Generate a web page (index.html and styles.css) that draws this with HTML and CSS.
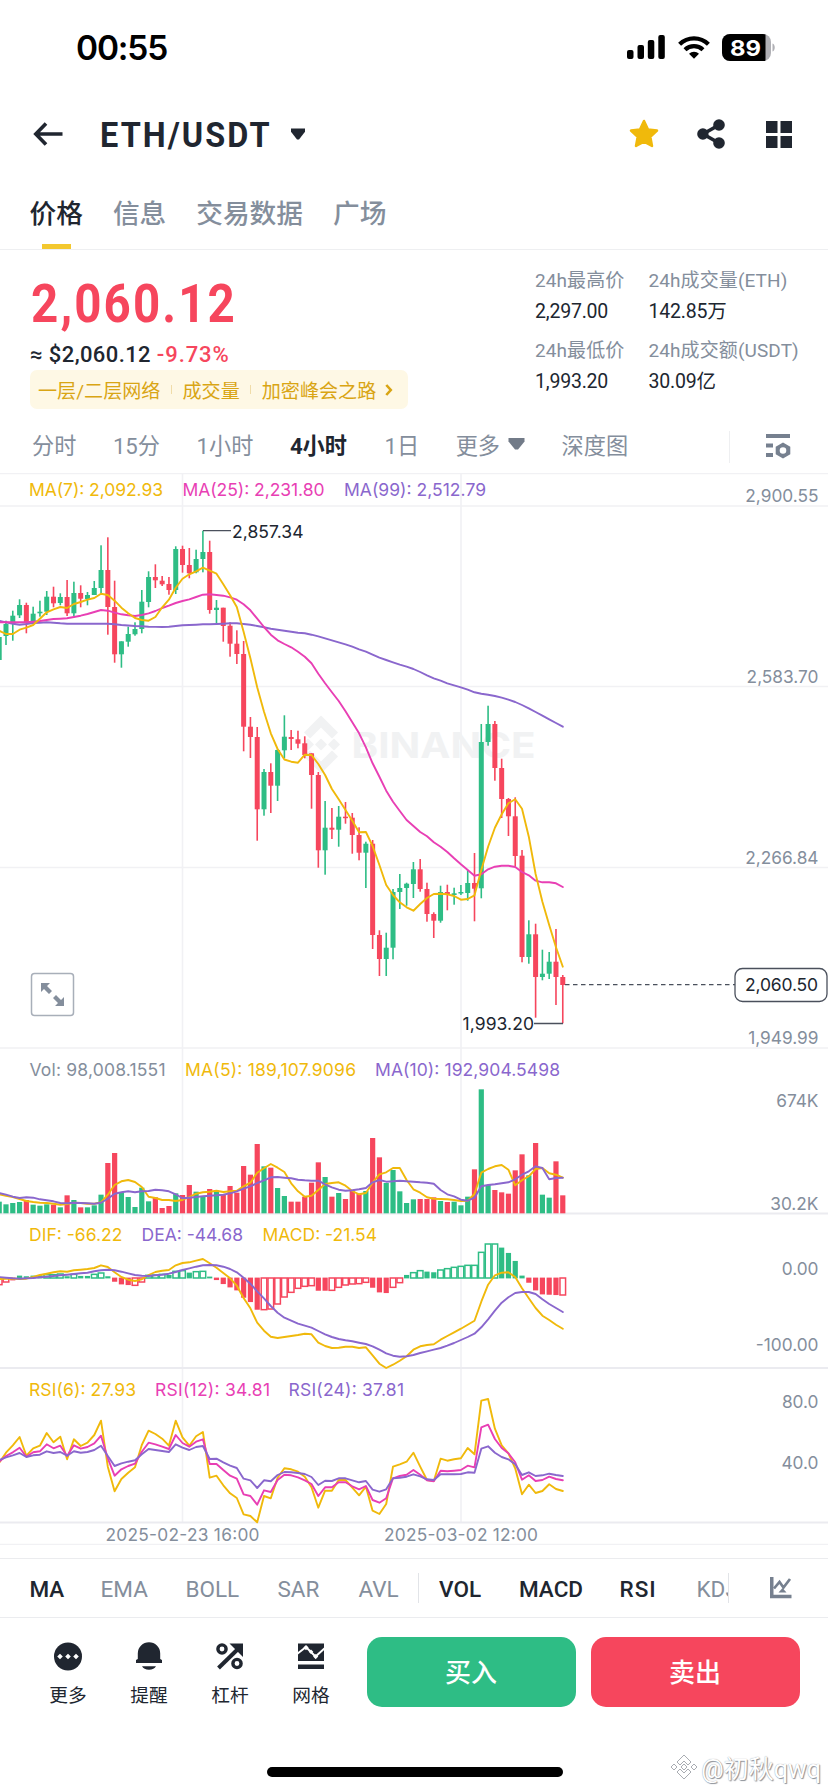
FILE: index.html
```html
<!DOCTYPE html>
<html lang="zh-CN">
  <head>
    <meta charset="utf-8" />
    <title>ETH/USDT</title>
    <link rel="stylesheet" href="styles.css">
  </head>

  <body>
    <!-- Status bar -->
    <div class="status-bar">
      <span class="clock">00:55</span>
      <svg class="signal" width="38" height="24" viewBox="0 0 38 24">
        <rect x="0" y="15" width="6.5" height="9" rx="2" />
        <rect x="10.5" y="10" width="6.5" height="14" rx="2" />
        <rect x="20.8" y="5" width="6.5" height="19" rx="2" />
        <rect x="31.3" y="0" width="6.5" height="24" rx="2" />
      </svg>
      <svg class="wifi" width="32" height="24" viewBox="0 0 32 24" fill="none" stroke="#000" stroke-width="4.2">
        <path d="M1.6 9.2a20.5 20.5 0 0 1 28.8 0" />
        <path d="M7 14.8a13 13 0 0 1 18 0" />
        <path d="M16 23.8l-5-5a7.2 7.2 0 0 1 10 0z" fill="#000" stroke="none" />
      </svg>
      <svg class="battery" width="54" height="27" viewBox="0 0 54 27">
        <defs>
          <clipPath id="batteryLevel"><rect width="43.5" height="27" /></clipPath>
        </defs>
        <rect width="49" height="27" rx="8" fill="#b0b0b5" />
        <rect width="49" height="27" rx="8" clip-path="url(#batteryLevel)" />
        <path d="M50.5 9.5c3 .8 3 7.2 0 8z" fill="#b0b0b5" />
        <text x="8" y="21.5" textLength="31" lengthAdjust="spacingAndGlyphs">89</text>
      </svg>
    </div>

    <!-- Pair header -->
    <div class="header">
      <svg class="back" width="30" height="24" viewBox="0 0 30 24" fill="none" stroke="#202630" stroke-width="3.6">
        <path d="M29.5 12H3M13 1.5L2.8 12L13 22.5" />
      </svg>
      <h1>ETH/USDT</h1>
      <svg class="caret" width="16" height="12" viewBox="0 0 16 12"><path d="M1 0.5h14v3.2L9 11.5H7L1 3.7z" fill="#202630" /></svg>
      <svg class="star" width="30" height="30" viewBox="0 0 30 30">
        <path d="M15 2l3.9 8.4 9.1 1.1-6.7 6.3 1.7 9.2-8-4.4-8 4.4 1.7-9.2L2 11.5l9.1-1.1z" fill="#f0b90b" stroke="#f0b90b" stroke-width="2.5" stroke-linejoin="round" />
      </svg>
      <svg class="share" width="28" height="30" viewBox="0 0 28 30" fill="#202630">
        <path d="M22 6L6 15l16 9" fill="none" stroke="#202630" stroke-width="3.6" />
        <circle cx="22" cy="6" r="5.8" /><circle cx="5.9" cy="15" r="5.7" /><circle cx="22" cy="24" r="5.8" />
      </svg>
      <svg class="grid" width="26" height="27" viewBox="0 0 26 27" fill="#202630">
        <path d="M0 0h11.5v12H0zM14.5 0H26v12H14.5zM0 15h11.5v12H0zM14.5 15H26v12H14.5z" />
      </svg>
    </div>

    <div class="tabs">
      <a class="tab active">价格</a>
      <a class="tab">信息</a>
      <a class="tab">交易数据</a>
      <a class="tab">广场</a>
    </div>

    <!-- Ticker -->
    <div class="ticker">
      <div class="ticker-main">
        <div class="price">2,060.12</div>
        <div class="fiat">≈ $2,060.12 <span class="change">-9.73%</span></div>
        <div class="tags">
          <span>一层/二层网络</span>
          <i></i>
          <span>成交量</span>
          <i></i>
          <span>加密峰会之路</span>
          <svg width="8" height="12" viewBox="0 0 8 12" fill="none" stroke="#d9a514" stroke-width="2.6"><path d="M1.3 1l4.5 5-4.5 5" /></svg>
        </div>
      </div>
      <div class="ticker-stats">
        <div class="stat"><label>24h最高价</label><b>2,297.00</b></div>
        <div class="stat"><label>24h成交量(ETH)</label><b>142.85万</b></div>
        <div class="stat"><label>24h最低价</label><b>1,993.20</b></div>
        <div class="stat"><label>24h成交额(USDT)</label><b>30.09亿</b></div>
      </div>
    </div>

    <div class="intervals">
      <span>分时</span>
      <span>15分</span>
      <span>1小时</span>
      <span class="active">4小时</span>
      <span>1日</span>
      <span class="more">更多<svg width="17" height="12" viewBox="0 0 17 12"><path d="M.5 0h16v3.5L10 11.5H7L.5 3.5z" fill="#727b88" /></svg></span>
      <span>深度图</span>
      <div class="interval-settings">
        <svg width="25" height="25" viewBox="0 0 25 25" fill="#76808f">
          <path d="M0 0h24v4H0zM0 9.5h7v4H0zM0 19h7v4H0z" />
          <path fill-rule="evenodd" d="M17 8.5l7.3 4.2v7.6L17 24.5l-7.3-4.2v-7.6zM17 13.2a3.3 3.3 0 1 0 0 6.6a3.3 3.3 0 0 0 0-6.6z" />
        </svg>
      </div>
    </div>

    <!-- Chart, series are drawn by script.js -->
    <svg id="chart" width="828" height="1072" viewBox="0 473 828 1072">
      <g class="grid-lines">
        <path d="M0 473.5H828M0 506H828M0 686.5H828M0 867.5H828M0 1048H828M182.5 473V1522M461 473V1522" />
        <path class="pane-line" d="M0 1213.5H828M0 1368H828M0 1522.5H828" />
        <path d="M0 1544.5H828" />
      </g>

      <g class="watermark">
        <path d="M310 738.5l11-11 11 11 6-6-17-17-17 17zM302 744.5l6-6 6 6-6 6zM315 744.5l6-6 6 6-6 6zM328 744.5l6-6 6 6-6 6zM304 756.5l17 17 17-17-6-6-11 11-11-11z" />
        <text x="351.5" y="758" textLength="184" lengthAdjust="spacingAndGlyphs">BINANCE</text>
      </g>

      <g id="candles"></g>
      <g id="volume"></g>
      <g id="macd"></g>
      <g id="lines"></g>

      <g class="legend">
        <text class="yellow" x="29" y="495.5" textLength="134">MA(7): 2,092.93</text>
        <text class="pink" x="182.5" y="495.5" textLength="142">MA(25): 2,231.80</text>
        <text class="purple" x="344" y="495.5" textLength="142">MA(99): 2,512.79</text>
        <text class="gray" x="29.5" y="1076" textLength="136">Vol: 98,008.1551</text>
        <text class="yellow" x="185" y="1076" textLength="171">MA(5): 189,107.9096</text>
        <text class="purple" x="375" y="1076" textLength="185">MA(10): 192,904.5498</text>
        <text class="yellow" x="29" y="1240.5" textLength="93.5">DIF: -66.22</text>
        <text class="purple" x="141.5" y="1240.5" textLength="101.5">DEA: -44.68</text>
        <text class="yellow" x="262.5" y="1240.5" textLength="114.5">MACD: -21.54</text>
        <text class="yellow" x="29" y="1395.5" textLength="107">RSI(6): 27.93</text>
        <text class="pink" x="155" y="1395.5" textLength="115">RSI(12): 34.81</text>
        <text class="purple" x="288.5" y="1395.5" textLength="115.5">RSI(24): 37.81</text>
      </g>

      <g class="axis">
        <text x="818.5" y="502">2,900.55</text>
        <text x="818.5" y="683">2,583.70</text>
        <text x="818.5" y="863.5">2,266.84</text>
        <text x="818.5" y="1044">1,949.99</text>
        <text x="818.5" y="1107">674K</text>
        <text x="818.5" y="1209.5">30.2K</text>
        <text x="818.5" y="1274.5">0.00</text>
        <text x="818.5" y="1350.5">-100.00</text>
        <text x="818.5" y="1407.5">80.0</text>
        <text x="818.5" y="1468.5">40.0</text>
        <text x="259.5" y="1540.5" textLength="154">2025-02-23 16:00</text>
        <text x="538" y="1540.5" textLength="154">2025-03-02 12:00</text>
      </g>

      <g class="marks">
        <path d="M203 530.7H231M534 1023.5H563" />
        <text x="232" y="537.5" textLength="71.5">2,857.34</text>
        <text x="462.5" y="1030" textLength="71.5">1,993.20</text>
        <path d="M565 984.7H735" stroke-dasharray="4.5 3.5" />
        <rect x="735" y="968.5" width="92" height="33" rx="7.5" fill="#fff" />
        <text x="745" y="991" textLength="73">2,060.50</text>
      </g>

      <g class="expand">
        <rect x="31.5" y="973.5" width="42" height="42" rx="3" />
        <path d="M41 983h9l-3 3 5 5-3 3-5-5-3 3zM64 1006h-9l3-3-5-5 3-3 5 5 3-3z" />
      </g>
    </svg>

    <!-- Indicators -->
    <div class="indicators">
      <div class="indicator-list">
        <span class="active i-ma">MA</span>
        <span class="i-ema">EMA</span>
        <span class="i-boll">BOLL</span>
        <span class="i-sar">SAR</span>
        <span class="i-avl">AVL</span>
        <span class="active i-vol">VOL</span>
        <span class="active i-macd">MACD</span>
        <span class="active i-rsi">RSI</span>
        <span class="i-kdj">KDJ</span>
      </div>
      <svg width="22" height="22" viewBox="0 0 22 22" fill="none" stroke="#76808f">
        <path d="M1.7 0v19.5H21.5" stroke-width="3.6" />
        <path d="M4 11.5L9.5 5l4 5.5L20 2" stroke-width="2.7" />
        <path d="M8.5 15.5l4-4.5 4 4.5z" fill="#76808f" stroke="none" />
      </svg>
    </div>

    <!-- Actions -->
    <div class="actions">
      <div class="action">
        <svg width="28" height="30" viewBox="0 0 28 30">
          <circle cx="14" cy="14.5" r="14" fill="#202630" />
          <path d="M6 11.7l2.8 2.8L6 17.3l-2.8-2.8zM14 11.7l2.8 2.8-2.8 2.8-2.8-2.8zM22 11.7l2.8 2.8-2.8 2.8-2.8-2.8z" fill="#fff" />
        </svg>
        更多
      </div>
      <div class="action">
        <svg width="28" height="30" viewBox="0 0 28 30" fill="#202630">
          <path d="M2.8 17V11.5a11.2 11.2 0 0 1 22.4 0V17L27 18v3H1v-3zM7 24.3h14a7.5 5.2 0 0 1-14 0z" />
        </svg>
        提醒
      </div>
      <div class="action">
        <svg width="28" height="30" viewBox="0 0 28 30" fill="none" stroke="#202630" stroke-width="3.4">
          <circle cx="6" cy="7" r="4.1" /><circle cx="21" cy="21.5" r="4.1" />
          <path d="M2.5 26L21.5 7.5" stroke-width="4" />
          <path d="M13.5 1.5H27V15z" fill="#202630" stroke="none" />
        </svg>
        杠杆
      </div>
      <div class="action">
        <svg width="28" height="30" viewBox="0 0 28 30">
          <path d="M1 1.5h26V19H1zM1 22.5h26V27H1z" fill="#202630" />
          <path d="M0 12L9 5l9.5 9.5L28 6" fill="none" stroke="#fff" stroke-width="2" />
          <path d="M9 3l2.6 2.6L9 8.2 6.4 5.6zM14 7.5l2.3 2.3-2.3 2.3-2.3-2.3zM18.7 12l2.6 2.6-2.6 2.6-2.6-2.6z" fill="#fff" />
        </svg>
        网格
      </div>
      <button class="buy">买入</button>
      <button class="sell">卖出</button>
    </div>

    <div class="footer">
      <div class="home-indicator"></div>
      <div class="signature">
        <svg width="28" height="28" viewBox="0 0 28 28" fill="#fff" stroke="#a9acb2" stroke-width="1">
          <path d="M7 9l7-7 7 7-3 3-4-4-4 4zM1 14l3-3 3 3-3 3zM11 14l3-3 3 3-3 3zM21 14l3-3 3 3-3 3zM7 19l3-3 4 4 4-4 3 3-7 7z" />
        </svg>
        <span>@初秋qwq</span>
      </div>
    </div>

    <script src="script.js"></script>
  </body>
</html>
```
FILE: styles.css
```css
body {
  width: 828px;
  height: 1792px;
  margin: 0;
  background-color: #ffffff;
  color: #202630;
  font-family: Roboto, "Noto Sans CJK SC", sans-serif;
  overflow: hidden;
}

svg {
  display: block;
  flex: none;
}

/* Status bar */
.status-bar {
  display: flex;
  align-items: center;
  height: 94px;
  padding-left: 76px;
  box-sizing: border-box;
}

.clock {
  width: 551px;
  padding-top: 1px;
  box-sizing: border-box;
  color: #000;
  font: 600 33.5px Inter, sans-serif;
  letter-spacing: -1.2px;
}

.wifi {
  margin-left: 12.5px;
}

.battery {
  margin-left: 12.5px;
}

.battery text {
  font: 700 22px Inter, sans-serif;
  fill: #fff;
}

/* Header */
.header {
  display: flex;
  align-items: center;
  height: 80px;
  padding-left: 33px;
}

.header h1 {
  width: 172px;
  margin: 2px 0 0 36.5px;
  font-size: 34.5px;
  font-weight: 700;
  letter-spacing: 2.2px;
  white-space: nowrap;
  transform: scaleX(0.94);
  transform-origin: left;
}

.caret {
  margin-left: 18.5px;
}

.star {
  margin-left: 322.5px;
}

.share {
  margin-left: 38px;
}

.grid {
  margin-left: 41.5px;
}

.tabs {
  display: flex;
  gap: 30px;
  height: 75px;
  padding-left: 29.5px;
  border-bottom: 1px solid #eeeff1;
}

.tab {
  position: relative;
  padding-top: 21px;
  font-size: 26.7px;
  line-height: 38px;
  font-weight: 500;
  color: #848e9c;
}

.tab.active {
  color: #202630;
}

.tab.active::after {
  content: "";
  position: absolute;
  left: 12px;
  bottom: 0;
  width: 29px;
  height: 5px;
  background-color: #f3c82f;
}

/* Ticker */
.ticker {
  display: flex;
  height: 170px;
  padding-left: 30px;
}

.ticker-main {
  width: 505px;
}

.price {
  margin: 20.5px 0 0 0.5px;
  height: 66px;
  color: #f6465d;
  font-size: 54px;
  line-height: 66px;
  font-weight: 700;
  letter-spacing: 2.4px;
  transform: scaleX(0.88);
  transform-origin: left;
}

.fiat {
  height: 33.5px;
  font-size: 22px;
  line-height: 35px;
  font-weight: 500;
  letter-spacing: 0.4px;
  white-space: pre;
}

.change {
  color: #f6465d;
  letter-spacing: 0.9px;
}

.tags {
  display: inline-flex;
  align-items: center;
  width: 362px;
  height: 39px;
  padding: 0 8px;
  border-radius: 7px;
  background-color: #fef8e5;
  color: #d9a514;
  font-size: 19.1px;
}

.tags i {
  width: 1px;
  height: 9px;
  margin: 0 10.5px;
  background-color: #f0dca8;
}

.tags svg {
  margin-left: 8.5px;
}

.ticker-stats {
  display: grid;
  grid-template-columns: 113.5px auto;
  align-content: start;
  padding-top: 15px;
}

.stat {
  height: 70px;
}

.stat label,
.stat b {
  display: block;
  height: 31px;
  line-height: 31px;
  white-space: nowrap;
}

.stat label {
  color: #848e9c;
  font-size: 19px;
  letter-spacing: 0.1px;
}

.stat b {
  font-size: 19.5px;
  font-weight: 400;
  letter-spacing: -0.2px;
}

/* Intervals */
.intervals {
  display: flex;
  align-items: center;
  height: 53px;
  padding-left: 32px;
  gap: 36.5px;
  color: #848e9c;
  font-size: 22.2px;
  white-space: nowrap;
}

.intervals span {
  padding-bottom: 5px;
}

.intervals .active {
  padding-right: 1px;
  color: #202630;
  font-weight: 700;
}

.intervals .more {
  display: flex;
  align-items: center;
  gap: 8px;
}

.interval-settings {
  display: flex;
  align-items: center;
  margin-left: auto;
  height: 32px;
  padding: 0 37px 0 36px;
  border-left: 1px solid #eeeff1;
}

/* Chart */
#chart text {
  font-family: Inter, sans-serif;
  font-size: 17.5px;
}

.grid-lines path {
  fill: none;
  stroke: #f1f1f4;
  stroke-width: 1.6;
}

.grid-lines .pane-line {
  stroke: #ebebf0;
  stroke-width: 1.8;
}

.watermark {
  fill: #f1f2f3;
}

#chart .watermark text {
  font-size: 36px;
  font-weight: 700;
}

.legend .yellow {
  fill: #f0b90b;
}

.legend .pink {
  fill: #e83fb4;
}

.legend .purple {
  fill: #8a67cd;
}

.legend .gray,
.axis text {
  fill: #848e9c;
}

#chart .axis text {
  font-size: 17.3px;
  text-anchor: end;
}

.marks text {
  fill: #202630;
}

.marks path,
.marks rect {
  stroke: #4a505c;
  stroke-width: 1.3;
}

.expand rect {
  fill: #fff;
  stroke: #a8afb9;
  stroke-width: 1.5;
}

.expand path {
  fill: #848e9c;
}

/* Indicators */
.indicators {
  display: flex;
  align-items: center;
  height: 58px;
  margin-top: 13px;
  border-top: 1.5px solid #ebecef;
  border-bottom: 1.5px solid #ebecef;
}

.indicator-list {
  display: flex;
  align-items: center;
  width: 698px;
  height: 30px;
  padding-left: 29.5px;
  margin-right: 41px;
  border-right: 1px solid #e2e4e8;
  color: #848e9c;
  font-size: 22.5px;
  overflow: hidden;
}

.indicator-list span {
  flex: none;
  padding-top: 1px;
}

.indicator-list .active {
  color: #202630;
  font-weight: 500;
}

.i-ma { width: 71px; }
.i-ema { width: 85px; }
.i-boll { width: 92px; }
.i-sar { width: 81px; }
.i-avl { width: 59px; }
.indicator-list .i-vol {
  width: 80px;
  padding: 1px 0 0 20.5px;
  border-left: 1px solid #e2e4e8;
  line-height: 30px;
}
.i-macd { width: 100.5px; }
.i-rsi { width: 77px; letter-spacing: 1px; }

/* Actions */
.actions {
  display: flex;
  height: 130px;
  padding: 19px 0 0 27.5px;
  box-sizing: border-box;
}

.action {
  display: flex;
  flex-direction: column;
  align-items: center;
  width: 81px;
  padding-top: 5px;
  gap: 8px;
  font-size: 18.7px;
}

.buy,
.sell {
  width: 209px;
  height: 70px;
  margin-left: 15px;
  padding: 0 0 4px;
  border: 0;
  border-radius: 15px;
  background-color: #2ebd85;
  color: #fff;
  font-family: inherit;
  font-size: 26px;
  font-weight: 500;
}

.sell {
  background-color: #f6465d;
}

/* Footer */
.footer {
  position: relative;
}

.home-indicator {
  width: 296px;
  height: 10px;
  margin: 19px 0 0 266.5px;
  border-radius: 5px;
  background-color: #000;
}

.signature {
  position: absolute;
  right: 7px;
  top: -18px;
  display: flex;
  align-items: center;
  gap: 3px;
  color: #fff;
  font-size: 25px;
  text-shadow: 0 0 1px #8c9098, 1px 1px 1px #8c9098;
}
```
FILE: script.js
```js
const NS = "http://www.w3.org/2000/svg";
const STEP = 6.79;
const GREEN = "#2ebd85";
const RED = "#f6465d";
const YELLOW = "#f0b90b";
const PINK = "#e83fb4";
const PURPLE = "#8a67cd";

// high, body top, body bottom, low
const candles = [
  "g 637 637 660 660", "g 620.7 624 636 645", "g 610.7 615.7 624 640.7", "g 599.3 605 615.3 618",
  "r 602.7 605 622.3 633.3", "g 606.7 613.7 622.3 623", "g 600.7 611.7 613.3 616.7", "g 591 596.7 611.7 615",
  "r 586.7 596.7 603.3 607.3", "g 593.3 597 603 605.3", "r 580 597 613.3 616", "g 581.7 593 613.3 616",
  "r 585.3 593 598.7 607.3", "g 592 595 599 605.3", "g 581 588 595 595", "g 545.3 570 588 593.3",
  "r 537.3 570 607 634.7", "r 580.7 607 654.3 662.7", "g 641.3 641.3 654.3 667.7", "g 626.7 634 641.7 646.7",
  "g 622.3 629 634.3 635.7", "g 590 601.7 629 633.3", "g 571.3 577 602 607.3", "r 564.3 577 580.3 588",
  "r 576 580.7 584.3 586", "r 577 584 590 594.7", "g 546.3 549 590 594", "r 545.7 549 565 572.7",
  "r 548 565 573.3 578.3", "g 549.7 559 572.3 573.3", "g 530.7 552 559 572.3", "r 540.7 552 610 613.7",
  "g 600 607.7 610 623.3", "r 607.7 607.7 626 641.7", "r 622.3 625.7 643.7 656.7", "r 630.3 643.7 654 664",
  "r 641 654 726.7 751.3", "r 717 726.7 737 758", "r 727 737 809.3 840.7", "g 769 772 809.3 815.7",
  "r 763.3 772 785.7 813", "g 749 750 785.7 801", "g 715.3 736.7 750.3 758.3", "r 730 737 739 750",
  "r 730.7 739.3 743.7 748.3", "r 736.3 743.3 755 758.3", "r 753.3 753.3 775 808.7", "r 772 775 850.3 867.7",
  "g 801 827.7 850.3 874.7", "r 808 827.7 829.7 839", "g 806 816.7 829.7 846.7", "r 802 816.7 818 823.7",
  "r 813 817.7 835 853.7", "r 827.3 835 852.7 860.3", "g 841.7 843.7 852.7 888", "r 840 843.7 935 949",
  "r 930.3 935 959 976", "g 932.7 947.7 959 976", "g 889 892 947.7 959.3", "g 874 888 892 909",
  "g 882.7 883.7 888 905.7", "g 862 869.3 884 898", "r 859 869.3 889 891.7", "r 882.7 889 914 921.7",
  "r 912.3 914 920.7 938", "g 885.7 892 920.7 922.7", "r 884.7 892 894.7 910.3", "g 887.7 893.3 895 904.7",
  "g 885 892 893.3 895", "g 870 883 893 900.7", "r 853 883 888.7 921.3", "g 724 742 888.3 898.3",
  "g 705.7 724 742 745.7", "r 721 724 768 780.7", "r 758.7 768 799 818", "r 798 799 816.3 836",
  "r 797.3 816.3 856 866.7", "r 850 855.7 957 962.3", "g 920.3 934.3 957 963.7", "r 923.7 934.3 977 1017.7",
  "g 949.7 973.7 977 980.3", "g 952 961.7 973.7 979", "r 929 961.7 977 1005", "r 975 977 985 1023.3"
];

const ma7 = [630.7, 634, 634, 629.7, 627.7, 625, 618.7, 612.3, 609.3, 607, 608, 604, 602, 599.7, 598, 593.7, 595, 600.7, 607.7, 613.3, 618, 620, 620.7, 617, 607.3, 599.7, 587.7, 578.7, 574.3, 571.3, 567.7, 570.7, 573.7, 584.3, 595.3, 607, 631.7, 658.3, 687.3, 711.7, 733.3, 749, 759.5, 761.7, 762.7, 754.7, 755, 764, 775, 789, 799.3, 810, 820.7, 832.3, 832, 846, 865, 885, 895, 902.3, 907.3, 910.7, 904, 898, 894, 893.7, 894.3, 896, 899.7, 899, 895.3, 870, 846.7, 827.7, 814.3, 803.3, 799.3, 808.7, 836.7, 874, 901.7, 925, 947.3, 966.7];
const ma25 = [622.3, 622.3, 622.3, 622.3, 622.3, 621.7, 621, 620, 619, 618.7, 618.3, 617, 615.7, 614, 612, 610, 610.7, 612.7, 614.3, 615.3, 616, 615, 613.3, 611, 608, 605.7, 603, 601, 599.3, 597, 594.7, 594.3, 595, 595.7, 597.3, 599.7, 604.3, 610.3, 618.7, 627, 634.7, 640.3, 644, 647.3, 651.7, 656.7, 663.3, 673.7, 683.3, 692.3, 701, 711.3, 722.3, 733.3, 747.3, 763.3, 776.7, 790.7, 801.7, 811, 820, 826, 832, 836.3, 842.3, 846.7, 852, 858.3, 864.3, 870, 875.7, 874.3, 869.3, 866.7, 865.7, 865.7, 867, 872, 875.3, 880.7, 882.3, 882.3, 883.3, 887];
const ma99 = [620.7, 622.3, 623.7, 624.7, 624, 623, 622.7, 622.3, 622.7, 623.3, 623.7, 623.7, 623.7, 623.7, 623.7, 623.7, 623.7, 624.3, 625, 625.5, 626, 626.3, 626.7, 626.9, 627, 626.7, 626, 625.3, 625, 624.7, 624.3, 624.2, 624, 623.7, 623.3, 623.3, 624, 624.7, 626, 627.3, 628.7, 629.7, 630.7, 631.7, 632.7, 633.3, 634.7, 636.3, 638.3, 640.3, 642.3, 644.3, 646.7, 649.3, 651.7, 654.7, 657.7, 660, 662.3, 664.7, 666.7, 669, 672, 675.3, 678.3, 680.7, 683.3, 685.3, 687.3, 689.7, 692.3, 693.7, 694.7, 696, 697.7, 699.7, 702, 705, 708.3, 712, 715.7, 719.3, 723, 726.7];

// Everything below is in thirds of a pixel from the top of its pane
const VOL_TOP = 1050;
const VOL_BASE = 1213.3;
const vol = [455, 463, 459, 456, 450, 464, 467, 463, 464, 472, 436, 450, 472, 472, 466, 434, 339, 309, 428, 441, 471, 413, 454, 442, 474, 468, 430, 435, 405, 425, 438, 417, 422, 434, 408, 428, 348, 374, 282, 349, 353, 414, 438, 455, 455, 440, 398, 337, 381, 440, 429, 447, 423, 431, 423, 264, 322, 399, 360, 424, 459, 448, 447, 447, 442, 453, 456, 455, 466, 440, 358, 118, 405, 420, 427, 431, 361, 313, 376, 279, 434, 443, 334, 436];
const volMa5 = [433, 437, 441, 447, 453, 456, 458, 459, 461, 464, 462, 458, 459, 461, 461, 457, 434, 405, 394, 390, 396, 411, 440, 444, 450, 450, 453, 450, 441, 431, 427, 425, 422, 426, 424, 422, 409, 398, 368, 355, 342, 353, 366, 400, 424, 440, 437, 420, 402, 399, 397, 407, 423, 433, 429, 398, 373, 367, 354, 354, 390, 418, 428, 442, 446, 447, 448, 450, 453, 452, 432, 368, 357, 349, 345, 359, 406, 391, 379, 357, 354, 370, 374, 383];
const volMa10 = [429, 434, 440, 444, 442, 443, 448, 451, 454, 459, 460, 458, 459, 460, 461, 458, 446, 431, 427, 424, 427, 424, 423, 419, 421, 424, 433, 445, 443, 441, 439, 437, 436, 434, 430, 424, 416, 409, 399, 391, 382, 381, 383, 385, 389, 391, 392, 392, 403, 412, 419, 422, 421, 418, 414, 397, 390, 395, 394, 392, 394, 395, 397, 398, 401, 420, 433, 439, 449, 452, 443, 409, 405, 403, 400, 397, 388, 374, 364, 349, 354, 388, 384, 383];

const MACD_ZERO = 1278;
// h marks a hollow bar
const macd = "-20h -12h -6 6 4 6 7 10h 10h 12h 4 11h 5 5 11h 15h 4 -10 -18 -20 -22h -12h 8h 9h 11h 8 20h 22h 15 19h 20h 3 -5 -17 -27 -36 -58 -71 -94 -95h -93h -78h -57h -43h -31h -25h -23h -37 -37 -37h -28h -21h -18h -17h -13h -28 -42 -44 -28h -14h 8 16h 22h 18 16 24h 28h 32h 35h 38h 38h 77h 102h 102h 90 74 50 6 -13 -36 -48 -49 -50 -51h".split(" ");
const dif = [687, 686, 686, 687, 686, 681, 675, 671, 667, 664, 665, 661, 659, 657, 654, 646, 651, 667, 681, 689, 693, 688, 675, 666, 662, 660, 646, 639, 637, 632, 627, 640, 653, 669, 685, 707, 744, 775, 818, 842, 860, 864, 861, 858, 855, 851, 853, 878, 888, 894, 893, 890, 890, 894, 892, 916, 941, 954, 944, 932, 919, 899, 889, 885, 883, 869, 858, 847, 836, 824, 812, 755, 704, 676, 668, 667, 681, 715, 745, 774, 797, 810, 824, 836];
const dea = [681, 683, 685, 686, 685, 684, 682, 680, 678, 676, 674, 672, 670, 668, 664, 661, 659, 661, 665, 670, 675, 677, 678, 676, 674, 671, 666, 660, 655, 650, 646, 645, 646, 650, 657, 667, 683, 701, 724, 745, 768, 788, 803, 812, 821, 827, 833, 843, 853, 861, 867, 871, 874, 878, 882, 889, 899, 910, 917, 920, 919, 915, 909, 904, 899, 894, 887, 879, 870, 861, 851, 832, 808, 782, 758, 742, 729, 726, 726, 732, 748, 762, 774, 786];

const RSI_TOP = 1300;
const rsi6 = [488, 458, 436, 411, 467, 445, 437, 399, 427, 410, 478, 418, 438, 428, 405, 362, 500, 574, 537, 518, 502, 435, 392, 402, 416, 437, 362, 412, 437, 409, 396, 533, 527, 556, 580, 594, 643, 648, 667, 588, 595, 533, 505, 508, 515, 530, 562, 623, 572, 572, 540, 540, 563, 586, 560, 632, 642, 612, 500, 493, 485, 458, 500, 540, 543, 476, 482, 478, 475, 444, 463, 302, 297, 386, 436, 460, 505, 583, 554, 579, 573, 553, 567, 573];
const rsi12 = [485, 468, 457, 443, 470, 457, 454, 433, 445, 437, 468, 436, 446, 441, 430, 407, 475, 527, 508, 498, 491, 455, 428, 433, 440, 447, 405, 429, 440, 425, 418, 492, 492, 510, 527, 536, 583, 588, 614, 571, 576, 540, 524, 526, 532, 541, 552, 588, 562, 562, 547, 547, 559, 568, 558, 600, 608, 595, 535, 528, 524, 510, 524, 541, 544, 512, 514, 512, 510, 497, 502, 382, 374, 417, 444, 460, 487, 539, 526, 543, 540, 530, 537, 541];
const rsi24 = [480, 472, 466, 459, 471, 466, 464, 454, 459, 456, 467, 454, 458, 456, 450, 437, 468, 498, 490, 485, 481, 463, 447, 450, 453, 456, 433, 443, 450, 441, 438, 477, 476, 487, 497, 504, 536, 541, 564, 541, 544, 525, 516, 517, 519, 522, 531, 555, 542, 543, 535, 535, 541, 547, 543, 569, 575, 568, 535, 533, 530, 523, 529, 538, 540, 523, 523, 523, 522, 517, 518, 446, 439, 458, 471, 478, 493, 525, 517, 528, 526, 521, 525, 528];

function xAt(i) {
  return -0.8 + i * STEP;
}

function add(parent, tag, attrs) {
  const el = document.createElementNS(NS, tag);
  for (const key in attrs) el.setAttribute(key, attrs[key]);
  document.getElementById(parent).appendChild(el);
}

function rect(parent, x, y, width, height, fill) {
  add(parent, "rect", { x, y, width, height, fill });
}

function line(values, color, top) {
  const points = values.map((v, i) => {
    const y = top === undefined ? v : top + v / 3;
    return xAt(i).toFixed(1) + "," + y.toFixed(1);
  });
  add("lines", "polyline", {
    points: points.join(" "), fill: "none", stroke: color,
    "stroke-width": 1.9, "stroke-linejoin": "round", "stroke-linecap": "round"
  });
}

candles.forEach((row, i) => {
  const [side, ...p] = row.split(" ");
  const [high, top, bottom, low] = p.map(Number);
  const color = side === "g" ? GREEN : RED;
  const x = xAt(i);
  rect("candles", x - 0.8, high, 1.6, low - high, color);
  rect("candles", x - 2.5, top, 5, Math.max(bottom - top, 1.5), color);
  const y = VOL_TOP + vol[i] / 3;
  rect("volume", x - 2.6, y, 5.2, VOL_BASE - y, color);
});

line(dif, YELLOW, VOL_TOP);
line(dea, PURPLE, VOL_TOP);

macd.forEach((item, i) => {
  const value = parseFloat(item) / 3;
  const height = Math.abs(value);
  const color = value > 0 ? GREEN : RED;
  const y = value > 0 ? MACD_ZERO - value : MACD_ZERO;
  if (item.endsWith("h")) {
    add("macd", "rect", {
      x: xAt(i) - 2.8, y: y, width: 5.6, height: height,
      fill: "none", stroke: color, "stroke-width": 1.5
    });
  } else {
    rect("macd", xAt(i) - 2.6, y - 0.4, 5.2, height + 0.8, color);
  }
});

line(ma99, PURPLE);
line(ma25, PINK);
line(ma7, YELLOW);
line(volMa5, YELLOW, VOL_TOP);
line(volMa10, PURPLE, VOL_TOP);
line(rsi6, YELLOW, RSI_TOP);
line(rsi12, PINK, RSI_TOP);
line(rsi24, PURPLE, RSI_TOP);
```
